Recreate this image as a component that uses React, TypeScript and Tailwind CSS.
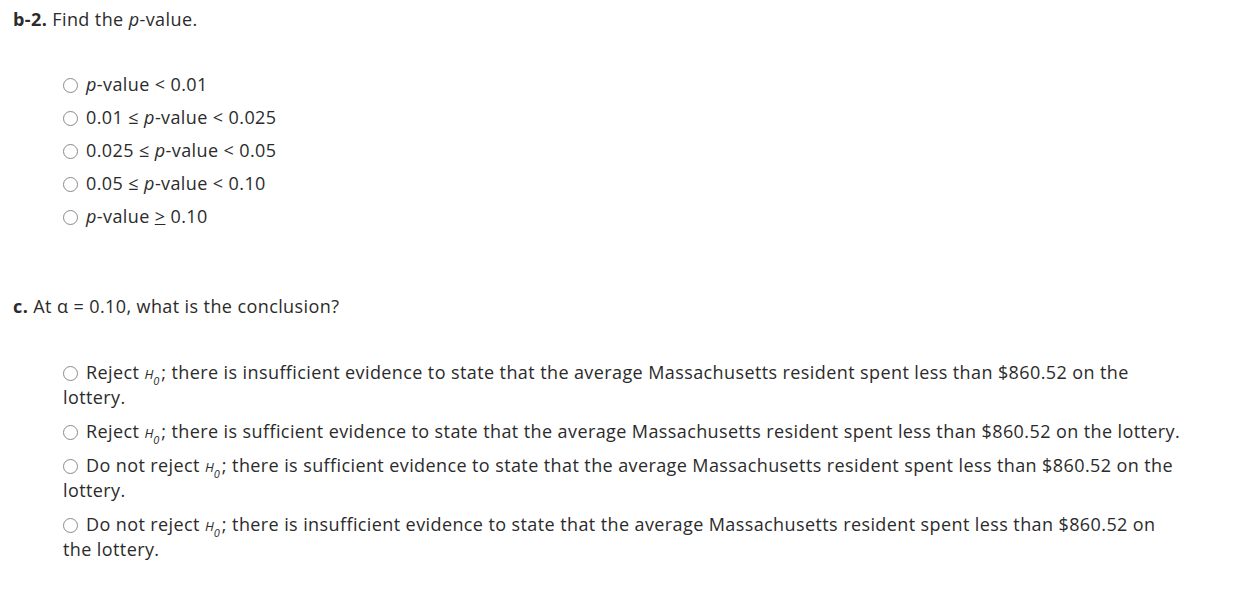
const H0 = () => (
  <span className="italic text-[13px] tracking-normal leading-none">
    H<sub className="text-[11px] leading-none align-[-3px] mr-[2px]">0</sub>
  </span>
);

const P = () => <span className="italic">p</span>;

function Radio({ children }: { children: React.ReactNode }) {
  return (
    <div className="leading-[25px]">
      <span className="inline-block w-[15px] h-[15px] rounded-full border border-[#8a8a8a] bg-white align-[-2px] mr-[8px]" />
      {children}
    </div>
  );
}

export default function App() {
  return (
    <div className="w-[1257px] h-[607px] bg-white text-[#2b2b2b] text-[18px] tracking-[0.4px] pl-[13px] pt-[7px]" style={{ fontFamily: '"Open Sans", sans-serif' }}>
      <div className="leading-[25px]">
        <span className="font-bold">b-2.</span> Find the <P />-value.
      </div>

      <div className="ml-[50px] mt-[40px] flex flex-col gap-[8px]">
        <Radio><P />-value &lt; 0.01</Radio>
        <Radio>0.01 ≤ <P />-value &lt; 0.025</Radio>
        <Radio>0.025 ≤ <P />-value &lt; 0.05</Radio>
        <Radio>0.05 ≤ <P />-value &lt; 0.10</Radio>
        <Radio><P />-value <span className="underline">&gt;</span> 0.10</Radio>
      </div>

      <div className="leading-[25px] mt-[65px]">
        <span className="font-bold">c.</span> At α = 0.10, what is the conclusion?
      </div>

      <div className="ml-[50px] mt-[41px] w-[1120px] flex flex-col gap-[9px]">
        <Radio>Reject <H0 />; there is insufficient evidence to state that the average Massachusetts resident spent less than $860.52 on the lottery.</Radio>
        <Radio>Reject <H0 />; there is sufficient evidence to state that the average Massachusetts resident spent less than $860.52 on the lottery.</Radio>
        <Radio>Do not reject <H0 />; there is sufficient evidence to state that the average Massachusetts resident spent less than $860.52 on the lottery.</Radio>
        <Radio>Do not reject <H0 />; there is insufficient evidence to state that the average Massachusetts resident spent less than $860.52 on the lottery.</Radio>
      </div>
    </div>
  );
}
